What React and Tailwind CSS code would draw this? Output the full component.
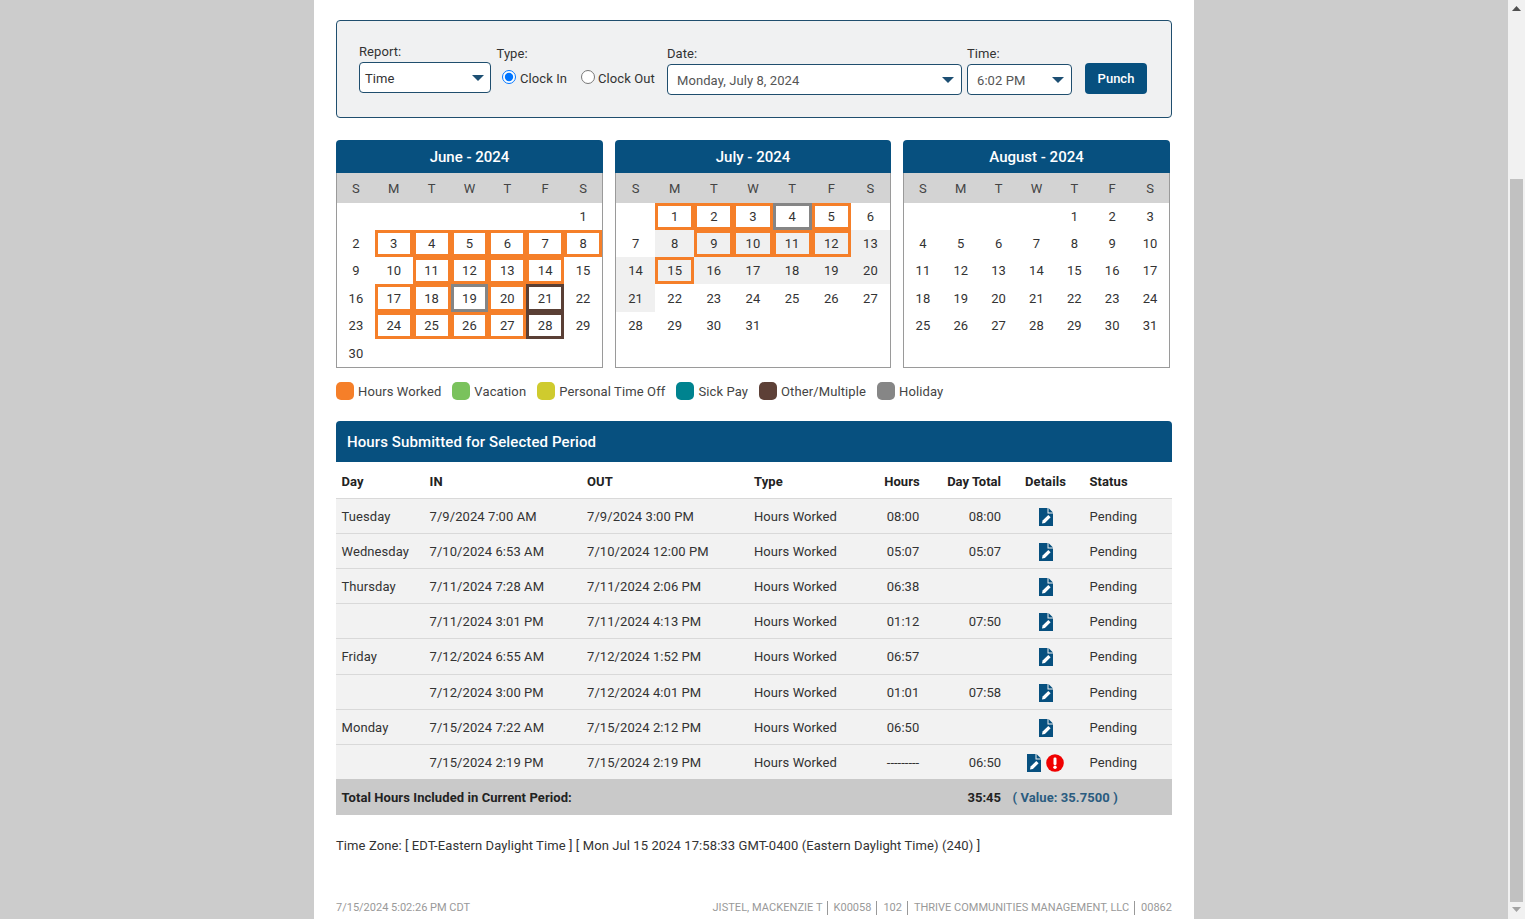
import React from "react";

const NAVY = "bg-[#07507f]";

function Caret() {
  return (
    <svg width="12" height="6" viewBox="0 0 12 6" className="shrink-0">
      <path d="M0 0H12L6 6Z" fill="#1d4f73" />
    </svg>
  );
}

function Select({ text, className, textClass }) {
  return (
    <div className={`flex items-center justify-between rounded-[4px] border border-[#1f4e6e] bg-white ${className}`}>
      <span className={`pt-[2px] ${textClass}`}>{text}</span>
      <Caret />
    </div>
  );
}

function FileIcon() {
  return (
    <svg width="14" height="18" viewBox="0 0 14 18" className="shrink-0">
      <path d="M0 0H8.5V5.5H14V18H0Z" fill="#07507f" />
      <path d="M9.5 0L14 4.5H9.5Z" fill="#07507f" />
      <path d="M3 15.5L3.6 12.6L9.3 7L11.6 9.3L5.9 14.9Z" fill="#fff" />
    </svg>
  );
}

function AlertIcon() {
  return (
    <svg width="18" height="18" viewBox="0 0 18 18" className="shrink-0">
      <circle cx="9" cy="9" r="8.8" fill="#f00000" />
      <rect x="7.5" y="3.5" width="3" height="7.5" rx="1.2" fill="#fff" />
      <circle cx="9" cy="13.2" r="1.7" fill="#fff" />
    </svg>
  );
}

const BORDER = {
  o: "border-[3px] border-[#f57f29]",
  g: "border-[3px] border-[#858585]",
  b: "border-[3px] border-[#5a3f35]",
};

function Calendar({ title, width, offset, days, marks, shaded = [] }) {
  const cells = [];
  for (let i = 0; i < offset; i++) cells.push(<div key={`e${i}`} />);
  for (let d = 1; d <= days; d++) {
    const mark = marks[d];
    const bg = shaded.includes(d) ? "bg-[#f0f0f0]" : "";
    const row = Math.floor((d - 1 + offset) / 7);
    const nudge = row === 3 || row === 5 ? "pt-[1px]" : "";
    cells.push(
      <div key={d} className={`box-border flex items-center justify-center ${nudge} ${bg} ${mark ? BORDER[mark] : ""}`}>
        {d}
      </div>
    );
  }
  return (
    <div className={`${width} shrink-0`}>
      <div className={`${NAVY} flex h-[33px] items-center justify-center rounded-t-[4px] pt-[2px] text-[15px] font-medium tracking-normal text-white`}>
        {title}
      </div>
      <div className="h-[195px] border-x border-b border-[#9a9a9a]">
        <div className="grid h-[30px] grid-cols-7 items-center bg-[#d3d3d3] pt-[1px] text-center text-[#444]">
          {["S", "M", "T", "W", "T", "F", "S"].map((d, i) => (
            <div key={i}>{d}</div>
          ))}
        </div>
        <div className="grid grid-cols-7 grid-rows-[27px_27px_27px_28px_27px_28px] text-[#333]">{cells}</div>
      </div>
    </div>
  );
}

const june = { 3: "o", 4: "o", 5: "o", 6: "o", 7: "o", 8: "o", 11: "o", 12: "o", 13: "o", 14: "o", 17: "o", 18: "o", 19: "g", 20: "o", 21: "b", 24: "o", 25: "o", 26: "o", 27: "o", 28: "b" };
const july = { 1: "o", 2: "o", 3: "o", 4: "g", 5: "o", 9: "o", 10: "o", 11: "o", 12: "o", 15: "o" };
const shadedJuly = [8, 9, 10, 11, 12, 13, 14, 15, 16, 17, 18, 19, 20, 21];

const legend = [
  ["Hours Worked", "bg-[#f57f29]"],
  ["Vacation", "bg-[#7ac25c]"],
  ["Personal Time Off", "bg-[#cfcb2e]"],
  ["Sick Pay", "bg-[#00838f]"],
  ["Other/Multiple", "bg-[#5d4037]"],
  ["Holiday", "bg-[#868686]"],
];

const rows = [
  ["Tuesday", "7/9/2024 7:00 AM", "7/9/2024 3:00 PM", "08:00", "08:00"],
  ["Wednesday", "7/10/2024 6:53 AM", "7/10/2024 12:00 PM", "05:07", "05:07"],
  ["Thursday", "7/11/2024 7:28 AM", "7/11/2024 2:06 PM", "06:38", ""],
  ["", "7/11/2024 3:01 PM", "7/11/2024 4:13 PM", "01:12", "07:50"],
  ["Friday", "7/12/2024 6:55 AM", "7/12/2024 1:52 PM", "06:57", ""],
  ["", "7/12/2024 3:00 PM", "7/12/2024 4:01 PM", "01:01", "07:58"],
  ["Monday", "7/15/2024 7:22 AM", "7/15/2024 2:12 PM", "06:50", ""],
  ["", "7/15/2024 2:19 PM", "7/15/2024 2:19 PM", "---------", "06:50", true],
];

export default function App() {
  return (
    <div className="flex h-[919px] overflow-hidden bg-[#cccccc] text-[13px] tracking-[0.08px] text-[#333] [font-family:Roboto,sans-serif]">
      <div className="flex min-w-0 flex-1 justify-center">
        <main className="h-[919px] w-[880px] bg-white px-[22px] pt-[20px]">
          <section className="flex h-[98px] items-start rounded-[4px] border border-[#1f4e6e] bg-[#f0f1f2] pl-[22px]">
            <div className="mt-[22px] w-[137.5px]">
              <div className="h-[19px] leading-[18px]">Report:</div>
              <Select text="Time" className="h-[31px] w-[132px] pl-[5px] pr-[6px]" textClass="" />
            </div>
            <div className="mt-[24px] w-[170.5px]">
              <div className="h-[19px] leading-[18px]">Type:</div>
              <div className="flex h-[27px] items-center pl-[5px]">
                <label className="flex items-center">
                  <input type="radio" name="t" defaultChecked className="m-0 mb-[2px] h-[14px] w-[14px] accent-[#0075ff]" />
                  <span className="ml-[4.5px] w-[60.5px] pt-[2px]">Clock In</span>
                </label>
                <label className="flex items-center">
                  <input type="radio" name="t" className="m-0 mb-[2px] h-[14px] w-[14px]" />
                  <span className="ml-[3.5px] pt-[2px]">Clock Out</span>
                </label>
              </div>
            </div>
            <div className="mt-[24px] w-[300px]">
              <div className="h-[19px] leading-[18px]">Date:</div>
              <Select text="Monday, July 8, 2024" className="h-[31px] w-[295px] pl-[9px] pr-[7px]" textClass="text-[#555]" />
            </div>
            <div className="mt-[24px] w-[118px]">
              <div className="h-[19px] leading-[18px]">Time:</div>
              <Select text="6:02 PM" className="h-[31px] w-[105px] pl-[9px] pr-[7px]" textClass="text-[#555]" />
            </div>
            <button className="mt-[42px] h-[31px] w-[62px] rounded-[4px] bg-[#07507f] font-medium tracking-normal text-white">Punch</button>
          </section>

          <section className="mt-[22px] flex gap-[12px]">
            <Calendar title="June - 2024" width="w-[267px]" offset={6} days={30} marks={june} />
            <Calendar title="July - 2024" width="w-[276px]" offset={1} days={31} marks={july} shaded={shadedJuly} />
            <Calendar title="August - 2024" width="w-[267px]" offset={4} days={31} marks={{}} />
          </section>

          <section className="mt-[14px] flex h-[18px] items-center tracking-[0.11px] text-[#444]">
            {legend.map(([label, color]) => (
              <div key={label} className="mr-[11px] flex items-center">
                <span className={`mr-[4px] h-[18px] w-[18px] rounded-[5px] ${color}`} />
                <span className="pt-[2px]">{label}</span>
              </div>
            ))}
          </section>

          <section className="mt-[21px]">
            <div className={`${NAVY} flex h-[41px] items-center rounded-t-[4px] pl-[11px] pt-[1px] text-[15px] font-medium tracking-[0.1px] text-white`}>
              Hours Submitted for Selected Period
            </div>
            <table className="w-[836px] table-fixed border-collapse">
              <colgroup>
                <col className="w-[88px]" />
                <col className="w-[157.5px]" />
                <col className="w-[167px]" />
                <col className="w-[130.5px]" />
                <col className="w-[46px]" />
                <col className="w-[82px]" />
                <col className="w-[77px]" />
                <col className="w-[88px]" />
              </colgroup>
              <thead>
                <tr className="h-[36px] text-[#222]">
                  <th className="pl-[5.5px] pt-[3px] text-left font-bold">Day</th>
                  <th className="pl-[5.5px] pt-[3px] text-left font-bold">IN</th>
                  <th className="pl-[5.5px] pt-[3px] text-left font-bold">OUT</th>
                  <th className="pl-[5.5px] pt-[3px] text-left font-bold">Type</th>
                  <th className="pt-[3px] text-center font-bold whitespace-nowrap">Hours</th>
                  <th className="pr-[6px] pt-[3px] text-right font-bold tracking-normal">Day Total</th>
                  <th className="pt-[3px] text-center font-bold">Details</th>
                  <th className="pl-[5.5px] pt-[3px] text-left font-bold">Status</th>
                </tr>
              </thead>
              <tbody>
                {rows.map((r, i) => (
                  <tr key={i} className={`border-t border-[#d9d9d9] bg-[#f2f2f2] ${i === 4 ? "h-[36px]" : "h-[35px]"}`}>
                    <td className="pl-[5.5px] pt-[2px]">{r[0]}</td>
                    <td className="pl-[5.5px] pt-[2px]">{r[1]}</td>
                    <td className="pl-[5.5px] pt-[2px]">{r[2]}</td>
                    <td className="pl-[5.5px] pt-[2px]">Hours Worked</td>
                    <td className="pl-[2px] pt-[2px] text-center tracking-normal">{r[3]}</td>
                    <td className="pr-[6px] pt-[2px] text-right tracking-normal">{r[4]}</td>
                    <td className="pt-[2px]">
                      <div className="flex items-center justify-center gap-[5px]">
                        <FileIcon />
                        {r[5] && <AlertIcon />}
                      </div>
                    </td>
                    <td className="pl-[5.5px] pt-[2px]">Pending</td>
                  </tr>
                ))}
                <tr className="h-[36px] bg-[#c9c9c9] font-bold text-[#222]">
                  <td colSpan={5} className="pl-[5.5px] pt-[1px]">Total Hours Included in Current Period:</td>
                  <td className="pr-[6px] pt-[1px] text-right tracking-normal">35:45</td>
                  <td colSpan={2} className="pl-[5.5px] pt-[1px] text-[#2b5c80]">( Value: 35.7500 )</td>
                </tr>
              </tbody>
            </table>
          </section>

          <p className="mt-[22px] leading-[18px] tracking-[0.09px]">
            Time Zone: [ EDT-Eastern Daylight Time ] [ Mon Jul 15 2024 17:58:33 GMT-0400 (Eastern Daylight Time) (240) ]
          </p>

          <footer className="mt-[46px] flex justify-between text-[11px] leading-[14px] tracking-normal text-[#999]">
            <span>7/15/2024 5:02:26 PM CDT</span>
            <div className="flex">
              <span className="pr-[4px] tracking-[0.05px]">JISTEL, MACKENZIE T</span>
              <span className="border-l border-[#999] pl-[6px] pr-[5px]">K00058</span>
              <span className="border-l border-[#999] pl-[6px] pr-[5px]">102</span>
              <span className="border-l border-[#999] pl-[6px] pr-[5px]">THRIVE COMMUNITIES MANAGEMENT, LLC</span>
              <span className="border-l border-[#999] pl-[6px]">00862</span>
            </div>
          </footer>
        </main>
      </div>

      <div className="flex h-[919px] w-[17px] shrink-0 flex-col items-center bg-[#f1f1f1]">
        <svg width="9" height="5" viewBox="0 0 9 5" className="mt-[6px]">
          <path d="M0 5L4.5 0L9 5Z" fill="#505050" />
        </svg>
        <div className="mt-[168px] h-[723px] w-[13px] bg-[#c1c1c1]" />
        <svg width="9" height="5" viewBox="0 0 9 5" className="mt-[5px]">
          <path d="M0 0L4.5 5L9 0Z" fill="#a3a3a3" />
        </svg>
      </div>
    </div>
  );
}
